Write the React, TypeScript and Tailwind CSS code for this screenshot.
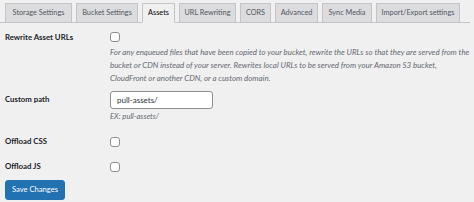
import React from 'react';

const tabs = [
  { label: 'Storage Settings', w: 'w-[67px]' },
  { label: 'Bucket Settings', w: 'w-[62px]' },
  { label: 'Assets', w: 'w-[33px]' },
  { label: 'URL Rewriting', w: 'w-[57px]' },
  { label: 'CORS', w: 'w-[31px]' },
  { label: 'Advanced', w: 'w-[43px]' },
  { label: 'Sync Media', w: 'w-[50px]' },
  { label: 'Import/Export settings', w: 'w-[84px]' },
];

const Checkbox = () => (
  <span className="block w-[10px] h-[10px] bg-white border border-[#8c8f94] rounded-[3px]" />
);

export default function App() {
  return (
    <div
      className="w-[474px] h-[202px] bg-[#f0f0f1] overflow-hidden text-[#1d2327]"
      style={{ fontFamily: 'Lato, "Open Sans", sans-serif' }}
    >
      {/* tab bar */}
      <div className="flex items-end gap-[4px] pt-[3px] pl-[5px] border-b border-[#c3c4c7] mr-[4px]">
        {tabs.map((t) => (
          <div
            key={t.label}
            className={
              t.w +
              ' h-[20px] -mb-px shrink-0 flex items-center justify-center whitespace-nowrap text-[7.3px] border border-[#c3c4c7] ' +
              (t.label === 'Assets'
                ? 'bg-[#f0f0f1] border-b-[#f0f0f1] text-black'
                : 'bg-[#dcdcde] text-[#50575e]')
            }
          >
            {t.label}
          </div>
        ))}
      </div>

      <div className="pl-[5px]">
        {/* Rewrite Asset URLs */}
        <div className="flex mt-[9px]">
          <div className="w-[105px] shrink-0 text-[7.8px] font-bold leading-[10px]">Rewrite Asset URLs</div>
          <div className="flex-1">
            <Checkbox />
            <p className="mt-[4px] text-[7.9px] italic leading-[13px] text-[#646970] pr-[4px]">
              For any enqueued files that have been copied to your bucket, rewrite the URLs so that they are served from the
              bucket or CDN instead of your server. Rewrites local URLs to be served from your Amazon S3 bucket,
              CloudFront or another CDN, or a custom domain.
            </p>
          </div>
        </div>

        {/* Custom path */}
        <div className="flex mt-[6px]">
          <div className="w-[105px] shrink-0 text-[7.8px] font-bold flex items-center h-[18px]">Custom path</div>
          <div className="flex-1">
            <input
              type="text"
              defaultValue="pull-assets/"
              className="block w-[103px] h-[18px] bg-white border border-[#8c8f94] rounded-[3px] px-[6px] text-[8px] text-[#2c3338] outline-none"
            />
            <p className="text-[7.6px] italic leading-[13px] text-[#646970] mt-[1px]">EX: pull-assets/</p>
          </div>
        </div>

        {/* Offload CSS */}
        <div className="flex items-center mt-[14px] h-[10px]">
          <div className="w-[105px] shrink-0 text-[7.8px] font-bold">Offload CSS</div>
          <Checkbox />
        </div>

        {/* Offload JS */}
        <div className="flex items-center mt-[15px] h-[10px]">
          <div className="w-[105px] shrink-0 text-[7.8px] font-bold">Offload JS</div>
          <Checkbox />
        </div>

        <button
          type="button"
          className="mt-[8px] h-[20px] px-[6px] bg-[#2271b1] text-white text-[7.6px] rounded-[3px] border border-[#2271b1]"
        >
          Save Changes
        </button>
      </div>
    </div>
  );
}
